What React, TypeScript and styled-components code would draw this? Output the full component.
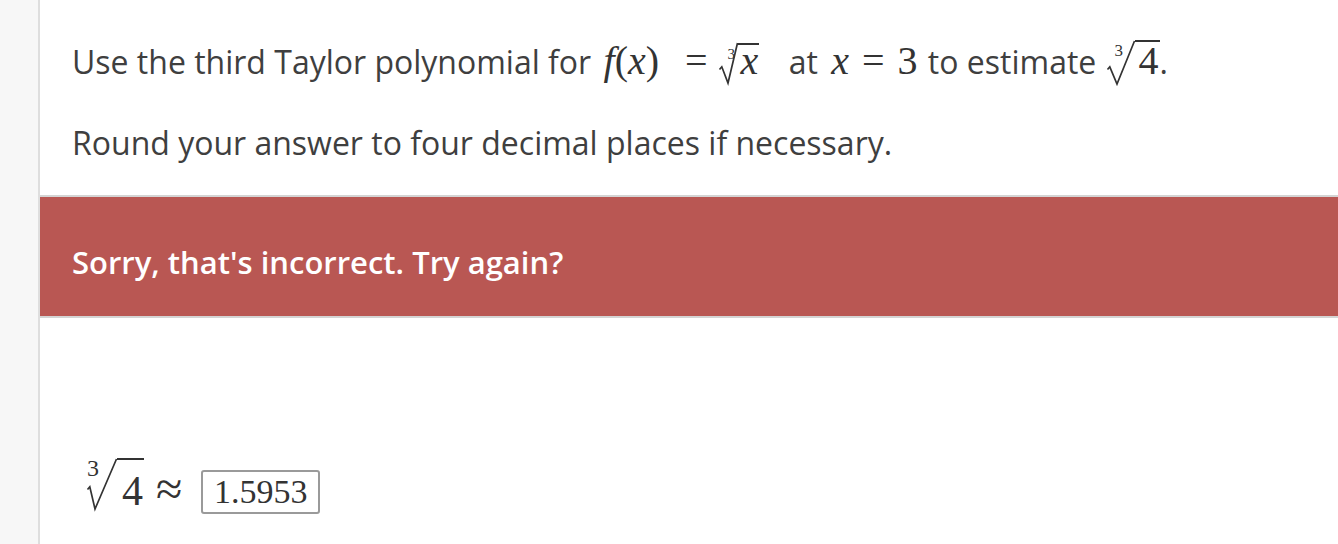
import React from "react";
import styled, { createGlobalStyle } from "styled-components";

const GlobalStyle = createGlobalStyle`
  html, body {
    margin: 0;
    padding: 0;
    background: #fff;
  }
  body {
    font-family: "Open Sans", "Liberation Sans", sans-serif;
    color: #3f3f3f;
  }
`;

type RadSize = {
  signW: number;
  signH: number;
  drop: number;
  tick: number;
  bottomX: number;
  indexSize: number;
  indexLift: number;
  indexLeft: number;
  bodyPadTop: number;
  bodyLH: number;
  bodyPadX: [number, number];
};

const radX: RadSize = {
  signW: 19,
  signH: 42,
  drop: 10,
  tick: 26,
  bottomX: 9,
  indexSize: 15,
  indexLift: 15,
  indexLeft: 9,
  bodyPadTop: 0,
  bodyLH: 31,
  bodyPadX: [3, 1],
};

const radFour: RadSize = {
  signW: 28,
  signH: 45,
  drop: 11,
  tick: 28,
  bottomX: 10,
  indexSize: 17,
  indexLift: 18,
  indexLeft: 8,
  bodyPadTop: 0,
  bodyLH: 37,
  bodyPadX: [4, 1],
};

const radDisplay: RadSize = {
  signW: 30,
  signH: 52,
  drop: 5,
  tick: 30,
  bottomX: 8,
  indexSize: 24,
  indexLift: 29,
  indexLeft: 0,
  bodyPadTop: 10,
  bodyLH: 42,
  bodyPadX: [5, 1],
};

function Radical({ index, size, children }: { index: string; size: RadSize; children: React.ReactNode }) {
  const { signW: w, signH: h, tick, bottomX } = size;
  return (
    <RadWrap>
      <RadSign width={w} height={h} viewBox={`0 0 ${w} ${h}`} style={{ verticalAlign: -size.drop }}>
        <path
          d={`M0.5 ${tick + 1.5} L2.8 ${tick - 1.2} L${bottomX} ${h - 1} L${w - 0.5} 1`}
          fill="none"
          stroke="currentColor"
          strokeWidth="1.7"
        />
      </RadSign>
      <RadIndex $size={size.indexSize} $lift={size.indexLift} $shift={size.indexLeft - w}>
        {index}
      </RadIndex>
      <RadBody
        $padTop={size.bodyPadTop}
        $lh={size.bodyLH}
        $padL={size.bodyPadX[0]}
        $padR={size.bodyPadX[1]}
      >
        {children}
      </RadBody>
    </RadWrap>
  );
}

export default function App() {
  return (
    <>
      <GlobalStyle />
      <Page>
        <Sidebar />
        <Main>
          <Question>
            <p>
              Use the third Taylor polynomial for{" "}
              <Math $l={4} $r={21}>
                <Var>f</Var>(<Var>x</Var>)<Op $l={26}>=</Op>
                <Radical index="3" size={radX}>
                  <Var>x</Var>
                </Radical>
              </Math>{" "}
              at{" "}
              <Math $l={5} $r={2}>
                <Var>x</Var>
                <Op $l={13} $r={13}>=</Op>3
              </Math>{" "}
              to estimate{" "}
              <Math $l={2} $r={0}>
                <Radical index="3" size={radFour}>
                  4
                </Radical>
              </Math>
              .
            </p>
            <p>Round your answer to four decimal places if necessary.</p>
          </Question>
          <Feedback>Sorry, that's incorrect. Try again?</Feedback>
          <Answer>
            <DisplayMath>
              <Radical index="3" size={radDisplay}>
                4
              </Radical>
              <Approx>≈</Approx>
              <AnswerBox>1.5953</AnswerBox>
            </DisplayMath>
          </Answer>
        </Main>
      </Page>
    </>
  );
}

const serif = `"Liberation Serif", "DejaVu Serif", serif`;

const Page = styled.div`
  display: flex;
  height: 544px;
  overflow: hidden;
`;

const Sidebar = styled.div`
  width: 38px;
  flex-shrink: 0;
  background: #f7f7f7;
  border-right: 2px solid #dedede;
`;

const Main = styled.div`
  flex: 1;
  display: flex;
  flex-direction: column;
`;

const Question = styled.div`
  padding: 40px 32px 30px;
  font-size: 32px;
  line-height: 44px;

  p {
    margin: 0 0 36px;
  }
  p:last-child {
    margin-bottom: 0;
  }
`;

const Math = styled.span<{ $l: number; $r: number }>`
  font-family: ${serif};
  font-size: 40px;
  line-height: 0;
  white-space: nowrap;
  color: #333;
  padding: 0 ${(p) => p.$r}px 0 ${(p) => p.$l}px;
`;

const Var = styled.span`
  font-style: italic;
`;

const Op = styled.span<{ $l?: number; $r?: number }>`
  margin: 0 ${(p) => p.$r ?? 11}px 0 ${(p) => p.$l ?? 11}px;
`;

const RadWrap = styled.span`
  font-family: ${serif};
  white-space: nowrap;
`;

const RadSign = styled.svg`
  display: inline-block;
  overflow: visible;
`;

const RadIndex = styled.span<{ $size: number; $lift: number; $shift: number }>`
  display: inline-block;
  width: 0;
  font-size: ${(p) => p.$size}px;
  line-height: 1;
  vertical-align: ${(p) => p.$lift}px;
  margin-left: ${(p) => p.$shift}px;
  margin-right: ${(p) => -p.$shift}px;
`;

const RadBody = styled.span<{ $padTop: number; $lh: number; $padL: number; $padR: number }>`
  display: inline-block;
  border-top: 2px solid currentColor;
  line-height: ${(p) => p.$lh}px;
  padding: ${(p) => p.$padTop}px ${(p) => p.$padR}px 0 ${(p) => p.$padL}px;
`;

const Feedback = styled.div`
  background: #b95753;
  border-top: 2px solid #d4d4d4;
  border-bottom: 2px solid #d4d4d4;
  color: #fff;
  font-weight: 600;
  font-size: 31px;
  line-height: 44px;
  padding: 43px 32px 32px;
`;

const Answer = styled.div`
  padding: 131px 32px 0 47px;
`;

const DisplayMath = styled.div`
  font-family: ${serif};
  font-size: 42px;
  line-height: 80px;
  color: #333;
  white-space: nowrap;
`;

const Approx = styled.span`
  display: inline-block;
  font-size: 48px;
  margin: 0 19px 0 12px;
`;

const AnswerBox = styled.span`
  display: inline-block;
  width: 119px;
  height: 44px;
  box-sizing: border-box;
  border: 2px solid #9a9a9a;
  border-radius: 3px;
  font-size: 34px;
  line-height: 40px;
  text-align: center;
  vertical-align: 2px;
`;
